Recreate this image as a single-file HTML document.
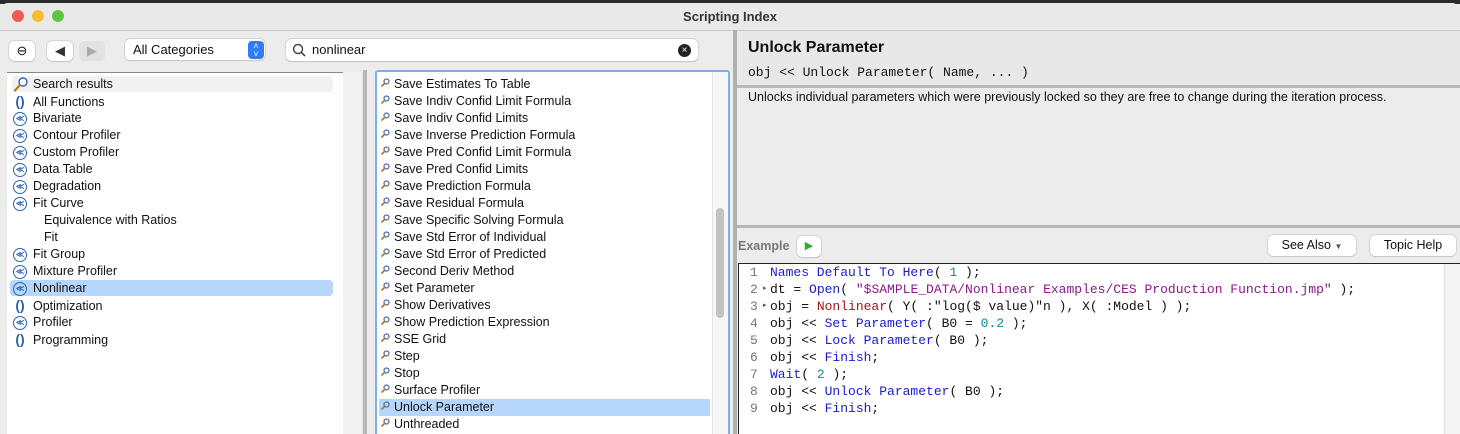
<!DOCTYPE html>
<html><head><style>
*{margin:0;padding:0;box-sizing:border-box}
body{width:1460px;height:434px;overflow:hidden;background:#ececec;font-family:"Liberation Sans",sans-serif;font-size:12.5px;color:#111;position:relative}
.a{position:absolute}
.row{position:absolute;height:17px;line-height:17px;white-space:nowrap}
.ic{display:inline-block;width:14px;height:14px;border:1.5px solid #2a64b0;border-radius:50%;color:#2a64b0;font-size:8px;line-height:11px;text-align:center;vertical-align:middle;margin-right:6px;font-weight:bold}
.par{display:inline-block;width:14px;color:#2a64b0;font-size:14px;margin-right:6px;font-weight:bold;text-align:center}
.mg{display:inline-block;width:9px;height:9px;margin-right:4px;vertical-align:middle;position:relative;top:-2px}
.code{font-family:"Liberation Mono",monospace;font-size:13px}
.kw{color:#1a1ad0}.fn{color:#1a1ad0}.rd{color:#a01818}.st{color:#8a1a8a}.nu{color:#0a8a8a}
.btn{position:absolute;background:#fff;border-radius:5px;box-shadow:0 0 0 .5px #bbb,0 1px 1px #ccc}
</style></head><body>
<svg width="0" height="0" style="position:absolute"><defs><symbol id="m" viewBox="0 0 9 9"><circle cx="5.5" cy="3.5" r="2.5" fill="none" stroke="#4a6ab0" stroke-width="1.2"/><path d="M3.8 5.2 L1 8" stroke="#a07820" stroke-width="1.6" stroke-linecap="round"/></symbol></defs></svg>
<div class="a" style="left:0;top:0;width:1460px;height:4px;background:#2a2a2a"></div>
<div class="a" style="left:0;top:3px;width:1460px;height:28px;background:#e9e9e9;border-bottom:1px solid #c8c8c8;border-radius:8px 8px 0 0"></div>
<div class="a" style="left:12px;top:10px;width:12px;height:12px;border-radius:50%;background:#ee5a52"></div>
<div class="a" style="left:32px;top:10px;width:12px;height:12px;border-radius:50%;background:#f5bd2f"></div>
<div class="a" style="left:52px;top:10px;width:12px;height:12px;border-radius:50%;background:#5fc640"></div>
<div class="a" style="left:0;top:9px;width:1460px;text-align:center;font-weight:bold;font-size:13px;color:#333">Scripting Index</div>

<div class="btn" style="left:9px;top:41px;width:26px;height:20px;text-align:center;line-height:19px;font-size:13px">⊖</div>
<div class="btn" style="left:47px;top:41px;width:26px;height:20px;text-align:center;line-height:19px;font-size:13px;color:#333">◀</div>
<div class="a" style="left:79px;top:41px;width:26px;height:20px;border-radius:5px;background:#e2e2e2;text-align:center;line-height:19px;font-size:13px;color:#aaa">▶</div>
<div class="btn" style="left:125px;top:39px;width:140px;height:21px;line-height:21px;padding-left:8px;font-size:13px">All Categories</div>
<div class="a" style="left:248px;top:41px;width:16px;height:18px;border-radius:4px;background:#2f7cf6;color:#fff;font-size:9px;text-align:center;line-height:8px;padding-top:1px">˄<br>˅</div>
<div class="btn" style="left:286px;top:39px;width:412px;height:22px;line-height:22px;padding-left:26px;font-size:13px">nonlinear</div>
<svg class="a" style="left:292px;top:43px" width="14" height="14" viewBox="0 0 14 14"><circle cx="6" cy="6" r="4.5" fill="none" stroke="#444" stroke-width="1.4"/><path d="M9.3 9.3 L13 13" stroke="#444" stroke-width="1.6"/></svg>
<div class="a" style="left:678px;top:44px;width:13px;height:13px;border-radius:50%;background:#222;color:#fff;font-size:10px;text-align:center;line-height:13px">×</div>

<!-- left pane -->
<div class="a" style="left:7px;top:72px;width:336px;height:362px;background:#fff;border-top:1px solid #888"></div>
<div class="a" style="left:343px;top:72px;width:18px;height:362px;background:#f2f2f2"></div>
<div class="a" style="left:363px;top:70px;width:4px;height:364px;background:#b8b8b8"></div>
<div class="a" style="left:12px;top:76px;width:321px;height:16px;background:#f1f1f1;border-radius:4px"></div>
<div class="a" style="left:10px;top:280px;width:323px;height:16px;background:#b7d6fb;border-radius:4px"></div>
<svg class="a" style="left:13px;top:77px" width="16" height="15" viewBox="0 0 16 15"><circle cx="10" cy="5" r="4" fill="#fff" stroke="#2a64b0" stroke-width="1.4"/><path d="M7 8 L2 13.5" stroke="#b08020" stroke-width="2.2" stroke-linecap="round"/></svg>
<div class="row" style="left:33px;top:76px">Search results</div>
<div class="row" style="left:13px;top:93px"><span class="par">()</span>All Functions</div>
<div class="row" style="left:13px;top:110px"><span class="ic">≪</span>Bivariate</div>
<div class="row" style="left:13px;top:127px"><span class="ic">≪</span>Contour Profiler</div>
<div class="row" style="left:13px;top:144px"><span class="ic">≪</span>Custom Profiler</div>
<div class="row" style="left:13px;top:161px"><span class="ic">≪</span>Data Table</div>
<div class="row" style="left:13px;top:178px"><span class="ic">≪</span>Degradation</div>
<div class="row" style="left:13px;top:195px"><span class="ic">≪</span>Fit Curve</div>
<div class="row" style="left:44px;top:212px">Equivalence with Ratios</div>
<div class="row" style="left:44px;top:229px">Fit</div>
<div class="row" style="left:13px;top:246px"><span class="ic">≪</span>Fit Group</div>
<div class="row" style="left:13px;top:263px"><span class="ic">≪</span>Mixture Profiler</div>
<div class="row" style="left:13px;top:280px"><span class="ic">≪</span>Nonlinear</div>
<div class="row" style="left:13px;top:297px"><span class="par">()</span>Optimization</div>
<div class="row" style="left:13px;top:314px"><span class="ic">≪</span>Profiler</div>
<div class="row" style="left:13px;top:331px"><span class="par">()</span>Programming</div>

<!-- middle -->
<div class="a" style="left:375px;top:70px;width:355px;height:364px;border:2px solid #7fb0ee;border-bottom:none;border-radius:3px 3px 0 0;background:#fff"></div>
<div class="a" style="left:712px;top:72px;width:16px;height:362px;background:#f6f6f6;border-left:1px solid #e4e4e4"></div>
<div class="a" style="left:716px;top:208px;width:8px;height:110px;background:#c2c2c2;border-radius:4px"></div>
<div class="a" style="left:379px;top:399px;width:331px;height:17px;background:#b7d6fb"></div>
<div class="a" style="left:733px;top:30px;width:4px;height:404px;background:#b0b0b0"></div>

<!-- right -->
<div class="a" style="left:737px;top:31px;width:723px;height:55px;background:#e8e8e8"></div>
<div class="a" style="left:748px;top:39px;font-weight:bold;font-size:16px">Unlock Parameter</div>
<div class="a code" style="left:748px;top:65px;font-size:13px">obj &lt;&lt; Unlock Parameter( Name, ... )</div>
<div class="a" style="left:737px;top:85px;width:723px;height:3px;background:#b8b8b8"></div>
<div class="a" style="left:748px;top:90px;font-size:12.5px">Unlocks individual parameters which were previously locked so they are free to change during the iteration process.</div>
<div class="a" style="left:737px;top:225px;width:723px;height:3px;background:#b8b8b8"></div>
<div class="a" style="left:738px;top:239px;font-weight:bold;font-size:12.5px;color:#777">Example</div>
<div class="btn" style="left:797px;top:236px;width:24px;height:21px;text-align:center;line-height:20px;color:#3a3;font-size:11px">▶</div>
<div class="btn" style="left:1268px;top:235px;width:88px;height:21px;line-height:21px;text-align:center;font-size:12.5px">See Also <span style="font-size:8px;color:#555">▼</span></div>
<div class="btn" style="left:1370px;top:235px;width:86px;height:21px;line-height:21px;text-align:center;font-size:12.5px">Topic Help</div>
<div class="a" style="left:738px;top:263px;width:722px;height:171px;background:#fff;border:1px solid #222;border-right:none;border-bottom:none"></div>
<div class="a" style="left:1444px;top:264px;width:16px;height:170px;background:#f4f4f4;border-left:1px solid #e0e0e0"></div>
<div class="a code" style="left:750px;top:264px;line-height:17px;white-space:pre;color:#777">1
2
3
4
5
6
7
8
9</div>
<div class="a code" style="left:770px;top:264px;line-height:17px;white-space:pre;color:#111"><span class="kw">Names Default To Here</span>( <span class="nu">1</span> );
dt = <span class="fn">Open</span>( <span class="st">"$SAMPLE_DATA/Nonlinear Examples/CES Production Function.jmp"</span> );
obj = <span class="rd">Nonlinear</span>( Y( :"log($ value)"n ), X( :Model ) );
obj &lt;&lt; <span class="kw">Set Parameter</span>( B0 = <span class="nu">0.2</span> );
obj &lt;&lt; <span class="kw">Lock Parameter</span>( B0 );
obj &lt;&lt; <span class="kw">Finish</span>;
<span class="kw">Wait</span>( <span class="nu">2</span> );
obj &lt;&lt; <span class="kw">Unlock Parameter</span>( B0 );
obj &lt;&lt; <span class="kw">Finish</span>;</div>
<div class="a" style="left:763px;top:284px;font-size:7px;color:#555">▸</div>
<div class="a" style="left:763px;top:301px;font-size:7px;color:#555">▸</div>

<div class="row" style="left:381px;top:76px"><svg class="mg"><use href="#m"/></svg>Save Estimates To Table</div>
<div class="row" style="left:381px;top:93px"><svg class="mg"><use href="#m"/></svg>Save Indiv Confid Limit Formula</div>
<div class="row" style="left:381px;top:110px"><svg class="mg"><use href="#m"/></svg>Save Indiv Confid Limits</div>
<div class="row" style="left:381px;top:127px"><svg class="mg"><use href="#m"/></svg>Save Inverse Prediction Formula</div>
<div class="row" style="left:381px;top:144px"><svg class="mg"><use href="#m"/></svg>Save Pred Confid Limit Formula</div>
<div class="row" style="left:381px;top:161px"><svg class="mg"><use href="#m"/></svg>Save Pred Confid Limits</div>
<div class="row" style="left:381px;top:178px"><svg class="mg"><use href="#m"/></svg>Save Prediction Formula</div>
<div class="row" style="left:381px;top:195px"><svg class="mg"><use href="#m"/></svg>Save Residual Formula</div>
<div class="row" style="left:381px;top:212px"><svg class="mg"><use href="#m"/></svg>Save Specific Solving Formula</div>
<div class="row" style="left:381px;top:229px"><svg class="mg"><use href="#m"/></svg>Save Std Error of Individual</div>
<div class="row" style="left:381px;top:246px"><svg class="mg"><use href="#m"/></svg>Save Std Error of Predicted</div>
<div class="row" style="left:381px;top:263px"><svg class="mg"><use href="#m"/></svg>Second Deriv Method</div>
<div class="row" style="left:381px;top:280px"><svg class="mg"><use href="#m"/></svg>Set Parameter</div>
<div class="row" style="left:381px;top:297px"><svg class="mg"><use href="#m"/></svg>Show Derivatives</div>
<div class="row" style="left:381px;top:314px"><svg class="mg"><use href="#m"/></svg>Show Prediction Expression</div>
<div class="row" style="left:381px;top:331px"><svg class="mg"><use href="#m"/></svg>SSE Grid</div>
<div class="row" style="left:381px;top:348px"><svg class="mg"><use href="#m"/></svg>Step</div>
<div class="row" style="left:381px;top:365px"><svg class="mg"><use href="#m"/></svg>Stop</div>
<div class="row" style="left:381px;top:382px"><svg class="mg"><use href="#m"/></svg>Surface Profiler</div>
<div class="row" style="left:381px;top:399px"><svg class="mg"><use href="#m"/></svg>Unlock Parameter</div>
<div class="row" style="left:381px;top:416px"><svg class="mg"><use href="#m"/></svg>Unthreaded</div>
</body></html>
